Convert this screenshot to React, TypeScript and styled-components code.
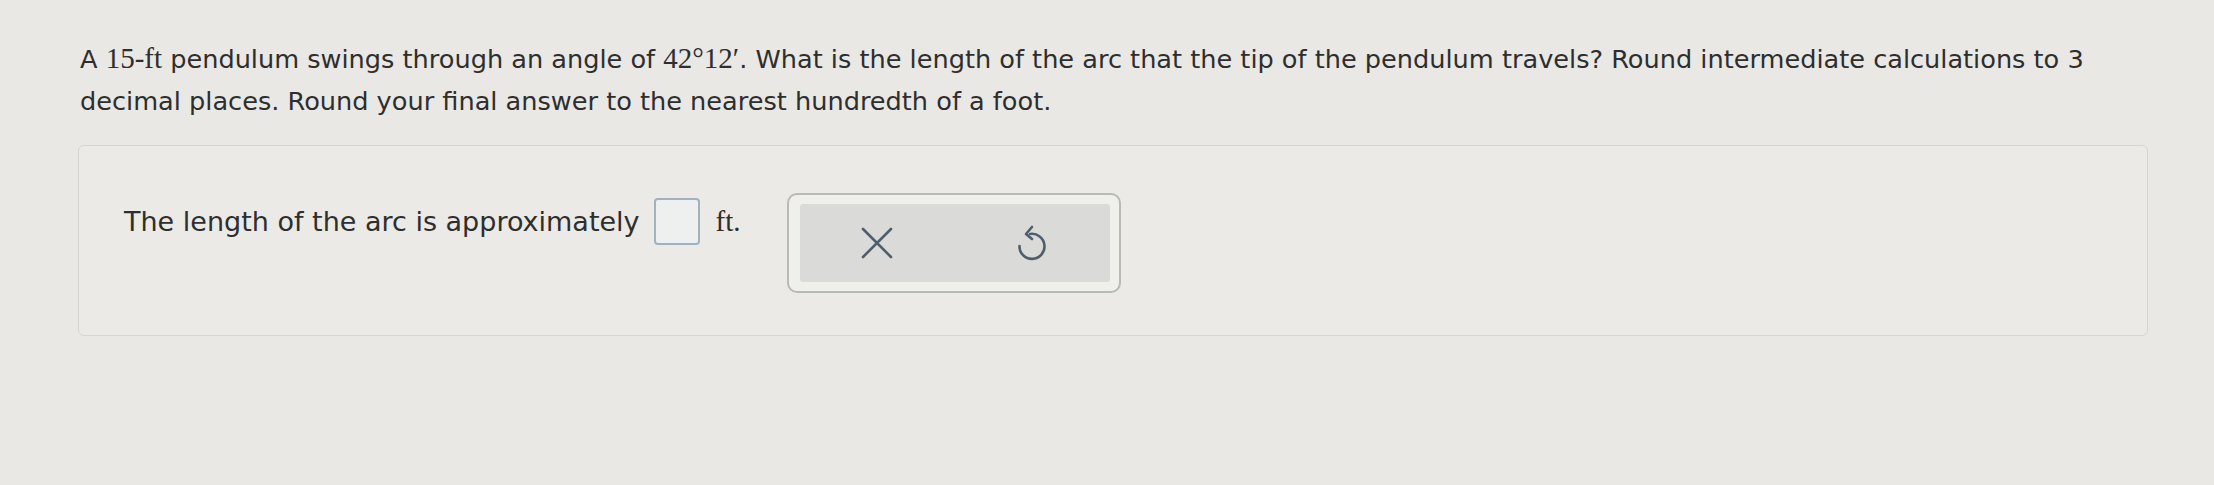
import React from "react";
import styled, { createGlobalStyle } from "styled-components";

const Global = createGlobalStyle`
  html, body { margin: 0; padding: 0; }
  body {
    background: #e9e8e4;
    font-family: "DejaVu Sans", Verdana, sans-serif;
    color: #2e2e2e;
  }
`;

const Page = styled.div`
  width: 2214px;
  height: 485px;
  box-sizing: border-box;
  padding: 37px 66px 0 78px;
`;

const Question = styled.p`
  margin: 0 0 23px 2px;
  font-size: 25.6px;
  line-height: 42px;
  white-space: nowrap;
`;

const Math = styled.span`
  font-family: "Liberation Serif", "Times New Roman", serif;
  font-size: 29px;
`;

const Panel = styled.div`
  box-sizing: border-box;
  height: 191px;
  border: 1.5px solid #d6d5d1;
  border-radius: 6px;
  background: #ebeae6;
  padding: 47px 0 0 45px;
`;

const Row = styled.div`
  display: flex;
  align-items: flex-start;
`;

const Sentence = styled.div`
  display: flex;
  align-items: center;
  height: 48px;
  margin-top: 4px;
  font-size: 27px;
`;

const AnswerBox = styled.span`
  display: inline-block;
  box-sizing: border-box;
  width: 46px;
  height: 47px;
  margin: 0 16px 0 14px;
  border: 2px solid #9fb3bf;
  border-radius: 4px;
  background: #eef0ef;
`;

const Unit = styled.span`
  font-family: "Liberation Serif", "Times New Roman", serif;
  font-size: 29px;
`;

const ButtonFrame = styled.div`
  box-sizing: border-box;
  width: 334px;
  height: 100px;
  margin-left: 46px;
  padding: 9px 9px 9px 11px;
  border: 2px solid #b9b9b7;
  border-radius: 10px;
  background: #efefec;
`;

const ButtonBar = styled.div`
  display: grid;
  grid-template-columns: 1fr 1fr;
  height: 100%;
  border-radius: 3px;
  background: #dadad8;
`;

const IconButton = styled.button`
  display: flex;
  align-items: center;
  justify-content: center;
  padding: 0;
  border: none;
  background: transparent;
  color: #4f5e6c;
`;

export default function App() {
  return (
    <>
      <Global />
      <Page>
        <Question>
          A <Math>15-ft</Math> pendulum swings through an angle of{" "}
          <Math>42°12′</Math>. What is the length of the arc that the tip of the
          pendulum travels? Round intermediate calculations to 3
          <br />
          decimal places. Round your final answer to the nearest hundredth of a
          foot.
        </Question>
        <Panel>
          <Row>
            <Sentence>
              The length of the arc is approximately
              <AnswerBox />
              <Unit>ft.</Unit>
            </Sentence>
            <ButtonFrame>
              <ButtonBar>
                <IconButton aria-label="clear">
                  <svg width="34" height="34" viewBox="0 0 34 34" fill="none" stroke="currentColor" strokeWidth="2.6" strokeLinecap="round">
                    <path d="M3 3 L31 31 M31 3 L3 31" />
                  </svg>
                </IconButton>
                <IconButton aria-label="undo">
                  <svg width="32" height="38" viewBox="0 0 32 38" fill="none" stroke="currentColor" strokeWidth="2.6" strokeLinecap="round" strokeLinejoin="round">
                    <path d="M14 10 A12.5 12.5 0 1 1 3.5 22" />
                    <path d="M16 3 L10 10 L16 15" />
                  </svg>
                </IconButton>
              </ButtonBar>
            </ButtonFrame>
          </Row>
        </Panel>
      </Page>
    </>
  );
}
